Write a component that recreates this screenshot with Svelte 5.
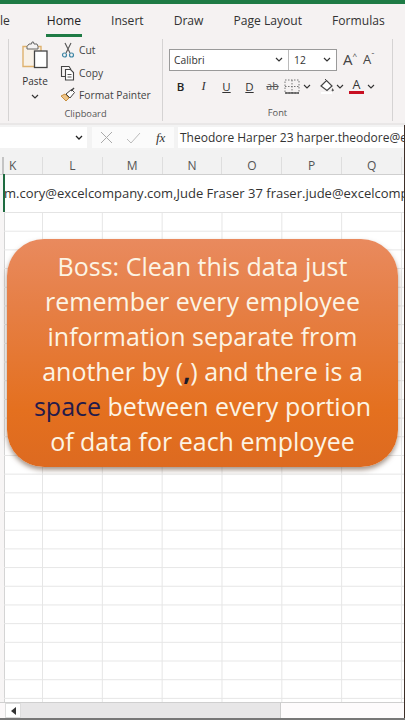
<script>
  const tabs = [
    { t: 'le' }, { t: 'Home', active: true }, { t: 'Insert' }, { t: 'Draw' }, { t: 'Page Layout' }, { t: 'Formulas' }
  ];
  const cols = ['K', 'L', 'M', 'N', 'O', 'P', 'Q'];
</script>

<div class="page">
  <div class="titlebar"></div>
  <nav class="tabs">
    {#each tabs as tab}
      <div class="tab" class:active={tab.active}>{tab.t}</div>
    {/each}
  </nav>

  <section class="ribbon">
    <div class="group clipboard">
      <div class="group-body clip-body">
        <div class="paste">
          <svg width="28" height="30" viewBox="0 0 28 30" fill="none">
            <path d="M2 5.5h18v20H2z" fill="#f8f1e7" stroke="#dfb26e" stroke-width="1.4"/>
            <path d="M6 5.5 L8 3h2.5L11 1h1.5L13 3h3l1 2.500V8H6z" fill="#f5f3f3" stroke="#666" stroke-width="1"/>
            <rect x="13.500" y="10" width="12.500" height="16.500" fill="#fff" stroke="#444" stroke-width="1.300"/>
          </svg>
          <span class="paste-label">Paste</span>
          <svg class="chev" width="8" height="5" viewBox="0 0 8 5"><path d="M1 1l3 3 3-3" fill="none" stroke="#333" stroke-width="1.200"/></svg>
        </div>
        <div class="clip-list">
          <div class="clip-row">
            <svg width="16" height="16" viewBox="0 0 16 16" fill="none"><path d="M5 1l5 10M11 1L6 11" stroke="#555" stroke-width="1.100"/><circle cx="4.500" cy="13" r="2" stroke="#3f87a6" stroke-width="1.200"/><circle cx="11.500" cy="13" r="2" stroke="#3f87a6" stroke-width="1.200"/></svg>
            <span>Cut</span>
          </div>
          <div class="clip-row">
            <svg width="16" height="16" viewBox="0 0 16 16" fill="none"><path d="M6 1.500H1.500v10H5" stroke="#444" stroke-width="1.100"/><path d="M6 1.500h3l2 3M5.500 4.500h5l3 3v7.500h-8z" fill="#fff" stroke="#444" stroke-width="1.100"/><path d="M7.500 9.500h4M7.500 12h4" stroke="#555"/></svg>
            <span>Copy</span>
          </div>
          <div class="clip-row">
            <svg width="16" height="16" viewBox="0 0 16 16" fill="none"><path d="M1 9l5 5 3-3-4-4z" fill="#edc58a" stroke="#c9903f"/><path d="M6 7l4 4 4.500-5.500-3-3z" fill="#fff" stroke="#444"/><path d="M11 4l3-3" stroke="#444" stroke-width="1.500"/></svg>
            <span>Format Painter</span>
          </div>
        </div>
      </div>
      <div class="group-label">Clipboard</div>
    </div>

    <div class="group font">
      <div class="group-body font-body">
        <div class="font-top">
          <div class="combo">
            <div class="combo-name"><span>Calibri</span><svg width="8" height="5" viewBox="0 0 8 5"><path d="M1 1l3 3 3-3" fill="none" stroke="#333" stroke-width="1.200"/></svg></div>
            <div class="combo-size"><span>12</span><svg width="8" height="5" viewBox="0 0 8 5"><path d="M1 1l3 3 3-3" fill="none" stroke="#333" stroke-width="1.200"/></svg></div>
          </div>
          <span class="grow">A<sup>^</sup></span>
          <span class="shrink">A<sup>ˇ</sup></span>
        </div>
        <div class="font-tools">
          <span class="tool fb">B</span>
          <span class="tool fi">I</span>
          <span class="tool fu">U</span>
          <span class="tool fd">D</span>
          <span class="tool fs">ab</span>
          <svg class="borders" width="16" height="15" viewBox="0 0 16 15" fill="none"><rect x="1" y="1" width="14" height="13" stroke="#777" stroke-dasharray="1.500 1.500"/><path d="M8 1v13M1 7.500h14" stroke="#777" stroke-dasharray="1.500 1.500"/><path d="M1 14h14" stroke="#333" stroke-width="1.200"/></svg>
          <svg class="c c1" width="8" height="5" viewBox="0 0 8 5"><path d="M1 1l3 3 3-3" fill="none" stroke="#333" stroke-width="1.100"/></svg>
          <svg class="fill" width="15" height="16" viewBox="0 0 15 16" fill="none"><path d="M1 8l5.500-5.500 5.500 5.500-5 4.500z" fill="#fff" stroke="#444" stroke-width="1.200"/><path d="M5 1l3 3" stroke="#444"/><path d="M12.500 10l1.500 2.500-1.500 1-1-1z" fill="#555"/><path d="M1 15h11" stroke="#fff" stroke-width="2"/></svg>
          <svg class="c c2" width="8" height="5" viewBox="0 0 8 5"><path d="M1 1l3 3 3-3" fill="none" stroke="#333" stroke-width="1.100"/></svg>
          <span class="color">A</span>
          <svg class="c" width="8" height="5" viewBox="0 0 8 5"><path d="M1 1l3 3 3-3" fill="none" stroke="#333" stroke-width="1.100"/></svg>
        </div>
      </div>
      <div class="group-label">Font</div>
    </div>
  </section>

  <div class="lower">
    <section class="formula">
      <div class="namebox">
        <svg width="8" height="5" viewBox="0 0 8 5"><path d="M1 1l3 3 3-3" fill="none" stroke="#222" stroke-width="1.300"/></svg>
      </div>
      <div class="fx-btns">
        <svg width="13" height="13" viewBox="0 0 13 13"><path d="M1 1l11 11M12 1L1 12" stroke="#aaa" fill="none"/></svg>
        <svg width="15" height="12" viewBox="0 0 15 12"><path d="M1 7l4 4L14 1" stroke="#bbb" fill="none"/></svg>
        <span class="fx">fx</span>
      </div>
      <div class="formula-input">Theodore Harper 23 harper.theodore@excelcompany.com</div>
    </section>

    <section class="col-head">
      <div class="corner"></div>
      {#each cols as c}
        <div class="col">{c}</div>
      {/each}
    </section>

    <section class="sheet">
      <div class="row-one">
        <div class="sel"></div>
        <div class="cell-text">m.cory@excelcompany.com,Jude Fraser 37 fraser.jude@excelcompany.com</div>
      </div>
      <div class="rows"></div>

      <div class="callout">
        <p>Boss: Clean this data just</p>
        <p>remember every employee</p>
        <p>information separate from</p>
        <p>another by (<b class="comma">,</b>) and there is a</p>
        <p><span class="dark">space</span> between every portion</p>
        <p>of data for each employee</p>
      </div>
    </section>

    <footer class="scroll">
      <div class="sbtn"><svg width="5" height="8" viewBox="0 0 5 8"><path d="M5 0v8L0 4z" fill="#333"/></svg></div>
      <div class="track"></div>
      <div class="rest"></div>
    </footer>
  </div>
</div>

<style>
  :global(body) { margin: 0; background: #fff; }
  .page {
    width: 405px; height: 720px; overflow: hidden; display: flex; flex-direction: column;
    font-family: "Open Sans", "Noto Sans", sans-serif; color: #333; background: #fff;
    border-bottom: 2px solid #777; box-sizing: border-box;
  }
  .titlebar { height: 4px; background: #1e7b45; flex: none; }
  .tabs { height: 33px; background: #f5f2f2; display: flex; align-items: center; gap: 30px; flex: none; }
  .tab { font-size: 12.100px; position: relative; line-height: 33px; height: 33px; flex: none; color: #333; white-space: nowrap; }
  .tab:first-child { margin-right: 7px; }
  .tab.active { color: #222; }
  .tab.active::after { content: ""; position: absolute; left: -1px; right: -1px; bottom: 0; height: 3px; background: #1e7b45; }
  .ribbon { height: 86px; background: #f5f2f2; display: flex; flex: none; border-bottom: 2px solid #e9e7e7; padding-left: 8px; }
  .group { display: flex; flex-direction: column; margin-top: 2px; height: 82px; border-left: 1px solid #d5d3d3; box-sizing: border-box; }
  .group-body { flex: 1; }
  .group-label { font-size: 9.300px; text-align: center; color: #555; height: 15px; line-height: 13px; }
  .clipboard { width: 154px; }
  .clip-body { display: flex; }
  .paste { width: 34px; margin-left: 9px; display: flex; flex-direction: column; align-items: center; padding-top: 2px; }
  .paste-label { font-size: 10px; margin-top: 3px; line-height: 14px; }
  .chev { margin-top: 6px; }
  .clip-list { display: flex; flex-direction: column; margin-left: 8px; }
  .clip-row { height: 22.500px; display: flex; align-items: center; gap: 3px; font-size: 10.300px; white-space: nowrap; color: #444; }
  .clip-row svg { flex: none; }
  .font { width: 231px; border-right: 1px solid #d5d3d3; }
  .font-body { padding: 9px 0 0 6px; }
  .font-top { display: flex; align-items: center; height: 23px; }
  .combo { width: 168px; height: 22px; display: flex; background: #fff; border: 1px solid #9a9a9a; box-sizing: border-box; flex: none; }
  .combo-name { width: 119px; border-right: 1px solid #bbb; display: flex; align-items: center; justify-content: space-between; padding: 0 5px 0 4px; box-sizing: border-box; font-size: 10.300px; }
  .combo-size { flex: 1; display: flex; align-items: center; justify-content: space-between; padding: 0 5px; box-sizing: border-box; font-size: 10.300px; }
  .grow, .shrink { line-height: 1; color: #444; flex: none; }
  .grow { margin-left: 6px; font-size: 15px; }
  .shrink { margin-left: 6px; font-size: 13px; }
  sup { font-size: 8px; line-height: 0; vertical-align: 6px; }
  .font-tools { display: flex; align-items: center; height: 24px; margin-top: 3px; font-size: 11.500px; }
  .font-tools > * { flex: none; }
  .tool { width: 23px; text-align: center; }
  .fb { font-weight: 600; color: #222; }
  .fi { font-family: "Liberation Serif", serif; font-style: italic; font-size: 12.500px; }
  .fu { text-decoration: underline; }
  .fd { text-decoration: underline; }
  .fs { text-decoration: line-through; font-size: 10.500px; color: #555; }
  .borders { margin-right: 3px; }
  .c { margin-right: 0; }
  .c1 { margin-right: 9px; }
  .fill { margin-right: 1px; }
  .c2 { margin-right: 5px; }
  .color { width: 15px; text-align: center; border-bottom: 3px solid #c80f22; line-height: 13px; margin-right: 3px; font-size: 12.500px; }
  .lower { flex: 1; min-height: 0; display: flex; flex-direction: column; border-right: 1.500px solid #3e2f28; }
  .formula { height: 25px; flex: none; display: flex; background: #f3f3f3; box-sizing: border-box; padding-top: 2px; }
  .namebox { width: 87px; background: #fff; display: flex; align-items: center; justify-content: flex-end; padding-right: 4px; box-sizing: border-box; flex: none; height: 21px; }
  .fx-btns { margin-left: 5px; width: 82px; height: 21px; background: #fbfbfb; display: flex; align-items: center; gap: 13px; padding-left: 8px; box-sizing: border-box; flex: none; }
  .fx { font-family: "Liberation Serif", serif; font-style: italic; font-size: 13px; color: #333; margin-left: 2px; }
  .formula-input { margin-left: 4px; flex: 1; min-width: 0; height: 21px; line-height: 21px; background: #fff; font-size: 12px; white-space: nowrap; overflow: hidden; padding-left: 2px; }
  .col-head { height: 25px; flex: none; display: flex; background: #f2f2f2; border-bottom: 1px solid #cfcfcf; box-sizing: border-box; }
  .corner { width: 4px; flex: none; border-right: 2px solid #c4c4c4; box-sizing: border-box; margin: 7px 0 0; }
  .col { width: 59.830px; height: 17px; margin-top: 7px; box-sizing: border-box; border-right: 1px solid #dedede; font-size: 12px; text-align: center; line-height: 18px; color: #555; flex: none; }
  .col-head .corner + .col { width: 39px; text-align: left; padding-left: 5px; }
  .sheet { position: relative; flex: 1; min-height: 0; border-left: 4px solid #f7f5f5; box-shadow: inset 1px 0 0 #d4d4d4; display: flex; flex-direction: column; }
  .row-one { height: 37px; flex: none; position: relative; border-bottom: 1px solid #e4e4e4; }
  .sel { position: absolute; left: -1px; top: -1px; bottom: 0; width: 1.500px; background: #1e6b40; }
  .cell-text { font-size: 13px; line-height: 36px; white-space: nowrap; overflow: hidden; color: #333; }
  .rows {
    flex: 1; min-height: 0;
    background-image:
      linear-gradient(180deg, transparent 17.700px, #e6e6e6 17.700px),
      linear-gradient(90deg, #e6e6e6 1px, transparent 1px);
    background-size: 100% 18.700px, 59.830px 100%;
    background-position: 0 0, 38px 0;
  }
  .callout {
    position: absolute; left: 3px; right: 6px; top: 64px; height: 228px; box-sizing: border-box;
    border-radius: 37px; padding-top: 10px;
    background: linear-gradient(180deg, #e98a5e 0%, #e67f45 30%, #e4701f 75%, #dd6a20 100%);
    box-shadow: 0 3px 5px rgba(90, 60, 40, 0.55);
    color: #fcf4e4; text-align: center; font-size: 25px; line-height: 35px;
  }
  .callout p { margin: 0; white-space: nowrap; }
  .comma { color: #1a1a2a; font-weight: 700; }
  .dark { color: #241a4a; }
  .scroll { height: 15px; flex: none; display: flex; padding: 0 0 0 5px; background: #fbf8f9; border-top: 1px solid #cfcfcf; }
  .sbtn { width: 16px; display: flex; align-items: center; justify-content: center; background: #fff; box-sizing: border-box; border: 1px solid #ddd; flex: none; }
  .track { width: 259px; background: #e7e6e7; flex: none; }
  .rest { flex: 1; background: #fdfbfc; border-left: 1px solid #ccc; }
</style>
